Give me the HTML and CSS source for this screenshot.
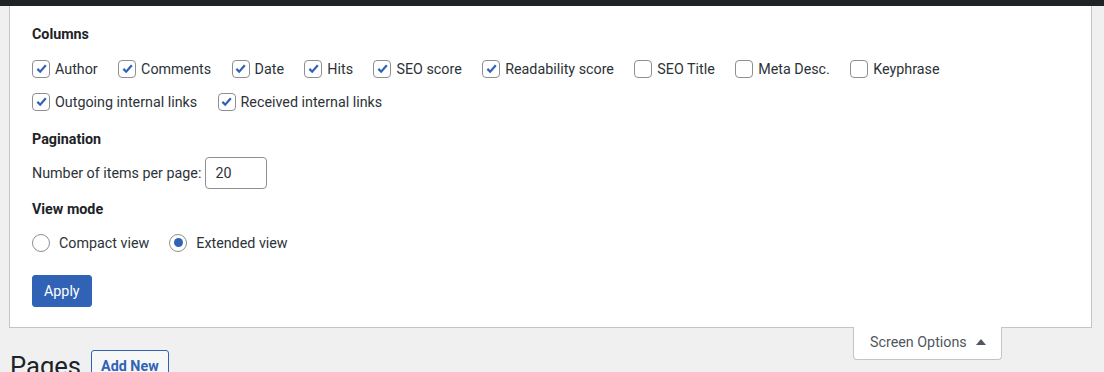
FILE: index.html
```html
<!DOCTYPE html>
<html lang="en">
<head>
    <meta charset="UTF-8">
    <title>Pages - Screen Options</title>
    <link rel="stylesheet" href="styles.css">
</head>
<body>
    <div class="adminbar"></div>

    <div class="wrap">
        <div class="panel">
            <h5>Columns</h5>
            <div class="columns">
                <label class="opt"><span class="box on"><svg viewBox="0 0 16 16"><path d="M3.6 8.4 6.6 11.4 12.6 4.6"/></svg></span>Author</label>
                <label class="opt"><span class="box on"><svg viewBox="0 0 16 16"><path d="M3.6 8.4 6.6 11.4 12.6 4.6"/></svg></span>Comments</label>
                <label class="opt"><span class="box on"><svg viewBox="0 0 16 16"><path d="M3.6 8.4 6.6 11.4 12.6 4.6"/></svg></span>Date</label>
                <label class="opt"><span class="box on"><svg viewBox="0 0 16 16"><path d="M3.6 8.4 6.6 11.4 12.6 4.6"/></svg></span>Hits</label>
                <label class="opt"><span class="box on"><svg viewBox="0 0 16 16"><path d="M3.6 8.4 6.6 11.4 12.6 4.6"/></svg></span>SEO score</label>
                <label class="opt"><span class="box on"><svg viewBox="0 0 16 16"><path d="M3.6 8.4 6.6 11.4 12.6 4.6"/></svg></span>Readability score</label>
                <label class="opt"><span class="box"></span>SEO Title</label>
                <label class="opt"><span class="box"></span>Meta Desc.</label>
                <label class="opt"><span class="box"></span>Keyphrase</label>
                <label class="opt"><span class="box on"><svg viewBox="0 0 16 16"><path d="M3.6 8.4 6.6 11.4 12.6 4.6"/></svg></span>Outgoing internal links</label>
                <label class="opt"><span class="box on"><svg viewBox="0 0 16 16"><path d="M3.6 8.4 6.6 11.4 12.6 4.6"/></svg></span>Received internal links</label>
            </div>

            <h5 class="sub">Pagination</h5>
            <div class="perpage">
                <span>Number of items per page:</span>
                <span class="field">20</span>
            </div>

            <h5>View mode</h5>
            <div class="views">
                <label class="opt"><span class="radio"></span>Compact view</label>
                <label class="opt"><span class="radio on"></span>Extended view</label>
            </div>

            <button class="apply">Apply</button>
        </div>

        <div class="tab">Screen Options <span class="arrow"></span></div>

        <div class="title">
            <h1>Pages</h1>
            <span class="addnew">Add New</span>
        </div>
    </div>
</body>
</html>
```

FILE: styles.css
```css
body {
    font-family: Roboto, "Liberation Sans", sans-serif;
    font-size: 14.3px;
    color: #3c434a;
    margin: 0;
    padding: 0;
    background-color: #f0f0f1;
    overflow: hidden;
}
.adminbar {
    height: 6px;
    background-color: #1d2327;
}
.wrap {
    margin: 0 12px 0 9px;
}
.panel {
    background-color: #fff;
    border: 1px solid #c3c4c7;
    border-top: none;
    padding: 18px 22px 20px 22px;
}
h5 {
    margin: 0;
    font-size: 14.3px;
    font-weight: 700;
    line-height: 20px;
    color: #1d2327;
}
h5.sub {
    margin-top: 11px;
}
.columns {
    display: flex;
    flex-wrap: wrap;
    column-gap: 20.4px;
    margin-top: 8px;
}
.opt {
    display: flex;
    align-items: center;
    gap: 5px;
    height: 33px;
    color: #2c3338;
}
.box {
    width: 18px;
    height: 18px;
    box-sizing: border-box;
    border: 1px solid #8c8f94;
    border-radius: 4px;
    background-color: #fff;
    display: flex;
    align-items: center;
    justify-content: center;
}
.box svg {
    width: 15px;
    height: 15px;
    fill: none;
    stroke: #3063b5;
    stroke-width: 2.4;
}
.perpage {
    display: flex;
    align-items: center;
    gap: 4px;
    margin: 8px 0 10px;
    color: #2c3338;
}
.field {
    width: 62px;
    height: 32px;
    box-sizing: border-box;
    border: 1px solid #8c8f94;
    border-radius: 4px;
    padding: 0 9px;
    line-height: 30px;
    color: #2c3338;
}
.views {
    display: flex;
    gap: 20px;
    margin-top: 7px;
}
.views .opt {
    gap: 9px;
}
.radio {
    width: 18px;
    height: 18px;
    box-sizing: border-box;
    border: 1px solid #8c8f94;
    border-radius: 50%;
    display: flex;
    align-items: center;
    justify-content: center;
}
.radio.on::before {
    content: "";
    width: 9px;
    height: 9px;
    border-radius: 50%;
    background-color: #3063b5;
}
.apply {
    display: block;
    margin-top: 16px;
    font-family: inherit;
    font-size: 14.3px;
    color: #fff;
    background-color: #3063b5;
    border: 1px solid #3063b5;
    border-radius: 3px;
    height: 32px;
    padding: 0 11px;
}
.tab {
    float: right;
    margin: -1px 90px 0 0;
    width: 149px;
    height: 33px;
    box-sizing: border-box;
    background-color: #fff;
    border: 1px solid #c3c4c7;
    border-top: none;
    border-radius: 0 0 4px 4px;
    padding-left: 16px;
    line-height: 30px;
    color: #50575e;
}
.arrow {
    display: inline-block;
    margin-left: 6px;
    vertical-align: 2px;
    border-left: 5px solid transparent;
    border-right: 5px solid transparent;
    border-bottom: 6px solid #50575e;
}
.title {
    display: flex;
    align-items: center;
    gap: 10px;
    padding: 22px 0 0 1px;
}
h1 {
    margin: 0;
    font-size: 25.6px;
    font-weight: 400;
    line-height: 32px;
    color: #1d2327;
}
.addnew {
    border: 1px solid #3063b5;
    border-radius: 3px;
    background-color: #f6f7f7;
    color: #3063b5;
    font-weight: 700;
    padding: 3px 9px;
    line-height: 24px;
}
```
